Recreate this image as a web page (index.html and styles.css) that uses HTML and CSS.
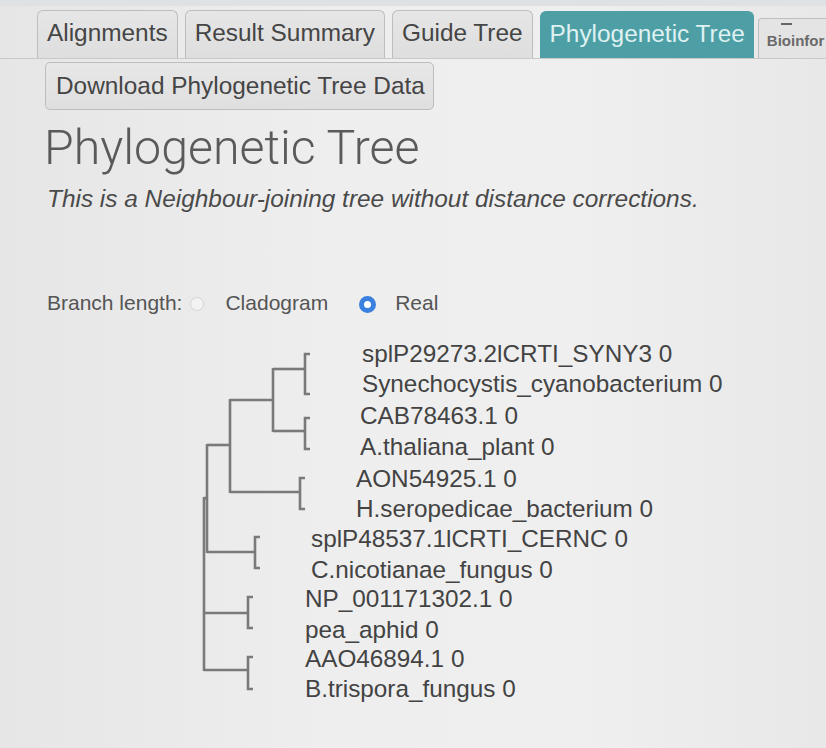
FILE: index.html
```html
<!DOCTYPE html>
<html>
<head>
<meta charset="utf-8">
<link rel="stylesheet" href="styles.css">
</head>
<body>
<div class="topstrip"></div>
<div class="tabbar">
  <div class="tab">Alignments</div>
  <div class="tab">Result Summary</div>
  <div class="tab">Guide Tree</div>
  <div class="tab active">Phylogenetic Tree</div>
  <div class="tab small"><span class="dash"></span>Bioinfor</div>
</div>
<div class="btnrow"><div class="btn">Download Phylogenetic Tree Data</div></div>
<h1 class="title">Phylogenetic Tree</h1>
<p class="desc">This is a Neighbour-joining tree without distance corrections.</p>
<div class="branch">
  <span class="lbl">Branch length:</span>
  <span class="radio"></span>
  <span class="opt">Cladogram</span>
  <span class="radio on"></span>
  <span class="opt">Real</span>
</div>
<svg class="tree" width="826" height="380" viewBox="0 330 826 380" xmlns="http://www.w3.org/2000/svg">
  <g class="edges" fill="none" stroke="#7a7a7a" stroke-width="2.6" stroke-linecap="butt">
    <path d="M310 354 H305 V394 H310"/>
    <path d="M273 369 H305"/>
    <path d="M310 418 H305 V449 H310"/>
    <path d="M273 431 H305"/>
    <path d="M273 368 V432"/>
    <path d="M230 400 H273"/>
    <path d="M230 399 V493"/>
    <path d="M230 492 H300"/>
    <path d="M305 478 H300 V509 H305"/>
    <path d="M207 445 H230"/>
    <path d="M207 444 V553"/>
    <path d="M207 552 H255"/>
    <path d="M260 537 H255 V568 H260"/>
    <path d="M204 498 H207"/>
    <path d="M204 497 V671"/>
    <path d="M204 613 H248"/>
    <path d="M253 597 H248 V628 H253"/>
    <path d="M204 670 H248"/>
    <path d="M253 657 H248 V689 H253"/>
  </g>
  <g class="labels">
    <text x="362" y="362">splP29273.2lCRTI_SYNY3 0</text>
    <text x="362" y="392">Synechocystis_cyanobacterium 0</text>
    <text x="360" y="424">CAB78463.1 0</text>
    <text x="360" y="455">A.thaliana_plant 0</text>
    <text x="356" y="487">AON54925.1 0</text>
    <text x="356" y="517">H.seropedicae_bacterium 0</text>
    <text x="311" y="547">splP48537.1lCRTI_CERNC 0</text>
    <text x="311" y="578">C.nicotianae_fungus 0</text>
    <text x="305" y="607">NP_001171302.1 0</text>
    <text x="305" y="638">pea_aphid 0</text>
    <text x="305" y="667">AAO46894.1 0</text>
    <text x="305" y="697">B.trispora_fungus 0</text>
  </g>
</svg>
</body>
</html>
```
FILE: styles.css
```css
html, body {
  margin: 0;
  padding: 0;
}
body {
  width: 826px;
  height: 748px;
  overflow: hidden;
  background: linear-gradient(90deg, #e6e6e6 0%, #eeeeee 40%, #efefef 70%, #e8e8e8 100%);
  font-family: "Liberation Sans", Arial, sans-serif;
  color: #474747;
}
.topstrip {
  height: 6px;
  background: #dfe2e5;
}
.tabbar {
  display: flex;
  align-items: flex-end;
  gap: 7px;
  padding: 4px 0 0 37px;
  border-bottom: 1px solid #c9c9c9;
  height: 48px;
}
.tab {
  box-sizing: border-box;
  height: 48px;
  padding: 0 9px;
  border: 1px solid #bdbdbd;
  border-bottom: none;
  border-radius: 6px 6px 0 0;
  background: linear-gradient(#e6e6e6, #dedede);
  font-size: 24.4px;
  line-height: 44px;
  color: #454545;
  white-space: nowrap;
}
.tab.active {
  background: #4e9fa5;
  border-color: #4e9fa5;
  color: #dff1f1;
  height: 47px;
  padding: 0 8px 0 9px;
}
.tab.small {
  position: relative;
  height: 40px;
  font-size: 15px;
  font-weight: bold;
  color: #6a6a6a;
  line-height: 44px;
  padding: 0 0 0 8px;
  border-right: none;
  border-radius: 4px 0 0 0;
  flex: 1;
  margin-left: -3px;
  background: #e4e4e4;
}
.dash {
  position: absolute;
  left: 22px;
  top: 4px;
  width: 11px;
  height: 2px;
  background: #666;
}
.btnrow {
  display: flex;
  padding-left: 45px;
  margin-top: 3px;
}
.btn {
  box-sizing: border-box;
  height: 48px;
  padding: 0 8px 0 10px;
  border: 1px solid #bdbdbd;
  border-radius: 5px;
  background: linear-gradient(#e7e7e7, #dfdfdf);
  font-size: 24.4px;
  line-height: 46px;
  color: #454545;
  white-space: nowrap;
}
.title {
  margin: 12px 0 0 44px;
  font-family: Roboto, "Liberation Sans", Arial, sans-serif;
  font-weight: 300;
  font-size: 48.3px;
  line-height: 51px;
  color: #5a5a5a;
}
.desc {
  margin: 12px 0 0 47px;
  font-style: italic;
  font-size: 24.4px;
  line-height: 28px;
  color: #4a4a4a;
}
.branch {
  display: flex;
  align-items: center;
  margin: 78px 0 0 47px;
  height: 24px;
  font-size: 21px;
  color: #555;
}
.lbl {
  margin-right: 8px;
}
.radio {
  box-sizing: border-box;
  width: 14px;
  height: 14px;
  border-radius: 50%;
  border: 1px solid #d4d4d4;
  background: #f3f3f3;
  margin-right: 21px;
  margin-top: 2px;
}
.radio.on {
  width: 17px;
  height: 17px;
  border: 5px solid #3a80de;
  background: #ffffff;
  margin-right: 19px;
  margin-left: 31px;
}
.tree {
  display: block;
  margin-top: 15px;
}
.labels text {
  font-family: "Liberation Sans", Arial, sans-serif;
  font-size: 24.3px;
  fill: #434343;
}
```
